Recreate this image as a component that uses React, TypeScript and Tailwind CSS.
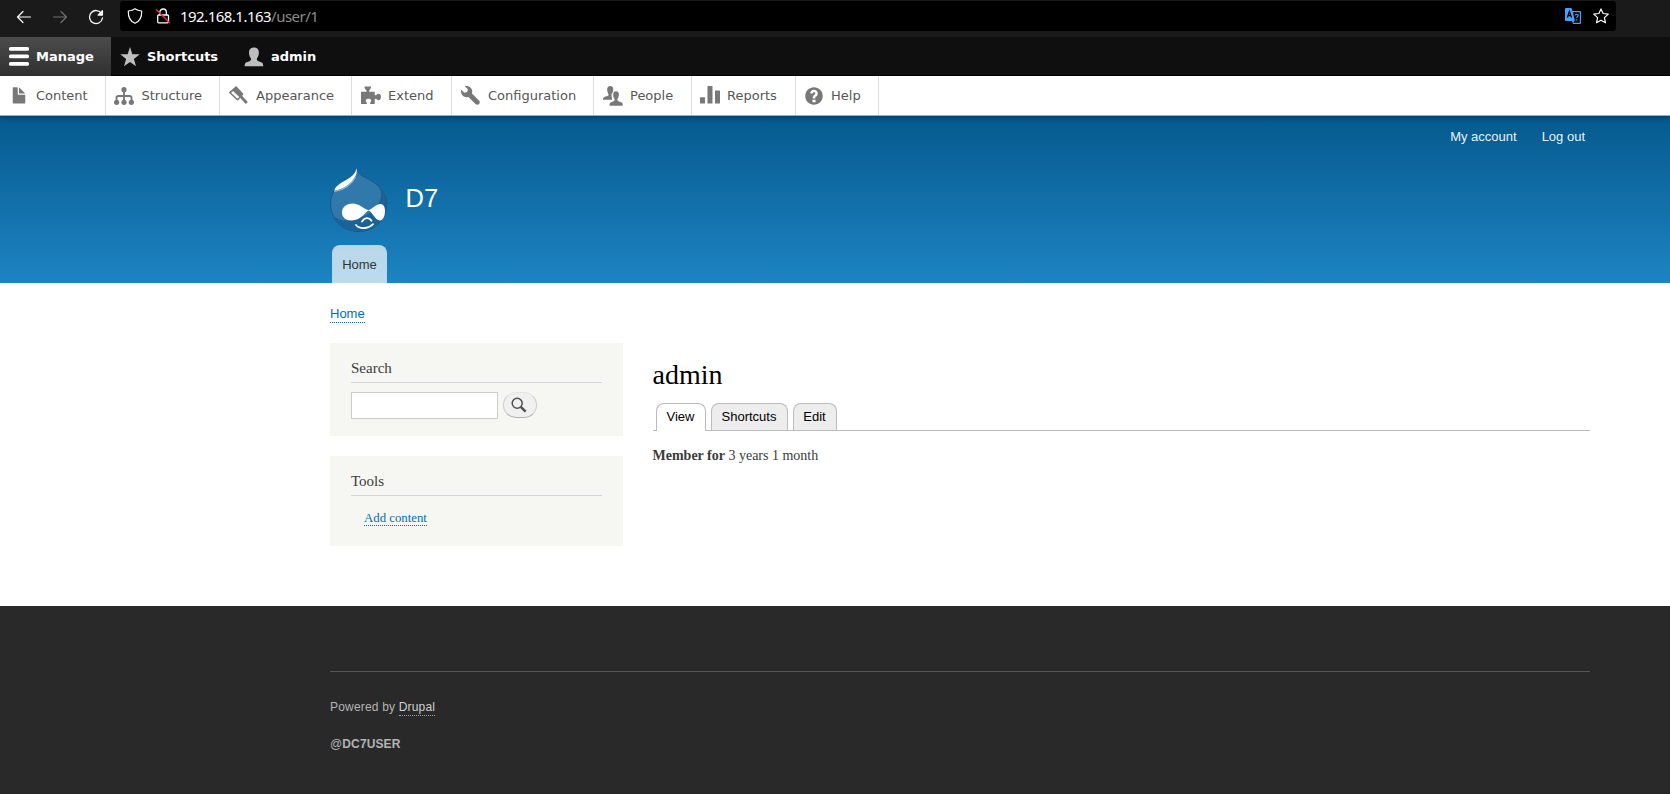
import React from 'react';

interface MenuItem {
  label: string;
  icon: React.ReactNode;
  box: string;
}

const Glyph: React.FC<{ children: React.ReactNode }> = ({ children }) => (
  <svg viewBox="0 0 16 16" className="w-5 h-5 shrink-0" fill="currentColor">
    {children}
  </svg>
);

const TRAY_ITEMS: MenuItem[] = [
  {
    label: 'Content',
    box: 'w-[106px] pl-[9px] gap-[7px]',
    icon: (
      <path d="M12.502 7h-5c-.276 0-.502-.225-.502-.5v-5c0-.275-.225-.5-.5-.5h-3c-.275 0-.5.225-.5.5v12.029c0 .275.225.5.5.5h9c.275 0 .5-.225.5-.5v-6.029c0-.275-.225-.5-.498-.5zM8.502 6h4c.275 0 .34-.159.146-.354l-4.293-4.292c-.195-.195-.353-.129-.353.146v4c0 .275.225.5.5.5z" />
    ),
  },
  {
    label: 'Structure',
    box: 'w-[114px] pl-2 gap-[7.500px]',
    icon: (
      <>
        <path d="M8 3v9M2 12.500V9.500Q2 8 3.500 8h9Q14 8 14 9.500v3" fill="none" stroke="currentColor" strokeWidth="1.500" />
        <circle cx="8" cy="2.900" r="2.100" />
        <circle cx="2.100" cy="13" r="2.100" />
        <circle cx="8" cy="13" r="2.100" />
        <circle cx="13.900" cy="13" r="2.100" />
      </>
    ),
  },
  {
    label: 'Appearance',
    box: 'w-[132px] pl-[9px] gap-[7px]',
    icon: (
      <>
        <path fillRule="evenodd" d="M5.700 0 11.300 5.900Q11.700 6.400 11.300 6.900L7.300 11.400Q6.800 11.800 6.300 11.400L.2 5.600Q-.2 5.200.2 4.800zM3.200 4 1.700 5.300 6.700 10.200 8.300 8.700z" />
        <path d="M9.300 8.200 14.200 13.600" stroke="currentColor" strokeWidth="2.200" />
      </>
    ),
  },
  {
    label: 'Extend',
    box: 'w-[100px] pl-[9px] gap-[7px]',
    icon: (
      <path d="M0 4.600h3.800c.6 0 .9-.5.500-1.100L3.400 2.300C2.900 1.500 2.600.9 2.900.3h5c.3.6 0 1.200-.5 2L6.600 3.500c-.4.600-.1 1.100.5 1.100H11v2.200c0 .6.700.8 1.200.4.7-.6 1.200-1 1.900-1 1.200 0 1.900 1.200 1.900 2.600s-.7 2.600-1.900 2.600c-.7 0-1.200-.5-1.900-1-.5-.4-1.200-.2-1.200.4v3.600H7.800c-.6 0-.8-.5-.5-1 .5-.7.9-1.100.9-1.800 0-1-1-1.500-2.200-1.500s-2.200.5-2.200 1.500c0 .7.4 1.100.9 1.800.3.5.1 1-.5 1H0z" />
    ),
  },
  {
    label: 'Configuration',
    box: 'w-[142px] pl-[9px] gap-[7px]',
    icon: (
      <path d="M14.416 11.586l-.01-.008-5.656-5.656c.15-.449.252-.921.252-1.421 0-2.485-2.016-4.500-4.502-4.500-.505 0-.981.102-1.434.255l2.431 2.431-.588 2.196-2.196.588-2.445-2.445c-.162.464-.268.956-.268 1.473 0 2.486 2.014 4.500 4.500 4.500.5 0 .972-.102 1.421-.251l5.667 5.665c.781.781 2.047.781 2.828 0s.781-2.047 0-2.827z" />
    ),
  },
  {
    label: 'People',
    box: 'w-[98px] pl-[9px] gap-[7px]',
    icon: (
      <>
        <path d="M5.800 0C7.500 0 8.300 1.300 8.200 3c0 1.200-.4 2-.8 2.600-.6 1-.8 2.700-.2 3.900v1.500H0c0-1.300.3-2 1.500-2.400l2-.7c1-.4 1.200-1 .6-2-.5-.8-.8-1.800-.8-3C3.300 1.200 4.200 0 5.800 0z" />
        <path d="M10.300 4c1.800 0 2.700 1.300 2.600 3.100 0 1.200-.5 2.200-.9 2.900-.6 1-.3 1.700.6 2.100l2 .7c1.200.4 1.400 1.300 1.400 3.200H5c0-1.900.3-2.800 1.400-3.200l1.800-.7c1-.4 1.200-1.100.6-2.100-.5-.7-.9-1.700-.9-2.900C7.900 5.300 8.700 4 10.300 4z" stroke="#fff" strokeWidth=".4" />
      </>
    ),
  },
  {
    label: 'Reports',
    box: 'w-[104px] pl-2 gap-[7px]',
    icon: (
      <>
        <rect x="0" y="9" width="4" height="5" rx=".4" />
        <rect x="6" y="0" width="4" height="14" rx=".4" />
        <rect x="12" y="3.500" width="4" height="10.500" rx=".4" />
      </>
    ),
  },
  {
    label: 'Help',
    box: 'w-[83px] pl-2 gap-[7px]',
    icon: (
      <path d="M8.002 1c-3.868 0-7.002 3.134-7.002 7s3.134 7 7.002 7c3.865 0 7-3.134 7-7s-3.135-7-7-7zm3 5c0 .551-.16 1.085-.477 1.586l-.158.22c-.07.093-.189.241-.361.393-.168.148-.35.299-.545.447l-.203.189-.141.129-.096.17-.021.235v.63h-2.001v-.704c.026-.396.078-.73.204-.999.125-.269.271-.498.439-.688l.225-.21-.01-.015.176-.14.137-.128c.186-.139.357-.277.516-.417l.148-.18c.098-.152.168-.323.168-.518 0-.552-.447-1-1.002-1-.551 0-.998.448-.998 1h-2.002c0-1.657 1.343-3 3-3s3.002 1.343 3.002 3zm-1.752 6.750c0 .138-.112.25-.25.25h-1.996c-.138 0-.25-.112-.25-.25v-1.500c0-.138.112-.25.25-.25h1.996c.138 0 .25.112.25.25z" />
    ),
  },
];

const BrowserBar = () => (
  <div className="h-[37px] bg-[#1a1a1a] flex items-start">
    <div className="w-[120px] h-[33px] shrink-0 flex items-center pl-4 text-[#fbfbfe]">
      <svg viewBox="0 0 16 16" className="w-4 h-4" fill="none" stroke="currentColor" strokeWidth="1.200" strokeLinecap="round" strokeLinejoin="round">
        <path d="M14.500 8H1.500M7 2.500 1.500 8 7 13.500" />
      </svg>
      <svg viewBox="0 0 16 16" className="w-4 h-4 ml-5 text-[#6e6e6e]" fill="none" stroke="currentColor" strokeWidth="1.200" strokeLinecap="round" strokeLinejoin="round">
        <path d="M1.500 8h13M9 2.500 14.500 8 9 13.500" />
      </svg>
      <svg viewBox="0 0 16 16" className="w-4 h-4 ml-5" fill="none" stroke="currentColor" strokeWidth="1.300" strokeLinecap="round" strokeLinejoin="round">
        <path d="M13.600 4.600A6.500 6.500 0 1 0 14.500 9" />
        <path d="M14.400 1.800v4.300h-4.300z" fill="currentColor" />
      </svg>
    </div>
    <div className="mt-px w-[1496px] h-[30px] rounded-[3px] bg-black flex items-center text-[#fbfbfe]">
      <svg viewBox="0 0 16 16" className="w-4 h-4 ml-[7px]" fill="none" stroke="currentColor" strokeWidth="1.200" strokeLinejoin="round">
        <path d="M8 .8c1.500 1.200 4 2 6.700 2.200C14.900 8.800 13 13.300 8 15.300 3 13.300 1.100 8.800 1.300 3 4 2.800 6.500 2 8 .8z" />
      </svg>
      <svg viewBox="0 0 16 16" className="w-4 h-4 ml-3" fill="none" strokeWidth="1.300">
        <rect x="2.700" y="7" width="10.800" height="7.800" rx="1" stroke="currentColor" />
        <path d="M4.800 7V4.300a3.300 3.300 0 0 1 6.600 0V7" stroke="currentColor" />
        <path d="M1 1.200 14.800 15" stroke="#e22850" strokeWidth="1.500" />
      </svg>
      <div className="ml-[9px] font-['Noto_Sans',sans-serif] text-[15px] leading-5 tracking-[-0.52px] flex-1">
        192.168.1.163<span className="text-[#8c8c8e]">/user/1</span>
      </div>
      <svg viewBox="0 0 16 16" className="w-4 h-4 text-[#45a1ff]">
        <path d="M1 0h5.500l1 3H15q1 0 1 1v11q0 1-1 1H8l-1-3H1q-1 0-1-1V1q0-1 1-1z" fill="currentColor" />
        <path d="M8 4.200h6.800v10.600H8.200l1.600-2.300z" fill="#000" />
        <path d="M2.400 9.500 4.400 3.500l2.200 6M3.200 7.500h2.600" fill="none" stroke="#000" strokeWidth="1.300" />
        <path d="M10.300 7.500c.2-1.700 3-1.600 2.800.1-.1 1-1.400 1.200-1.400 2.400M11.700 11.200v1.200" fill="none" stroke="currentColor" strokeWidth="1.200" />
      </svg>
      <svg viewBox="0 0 16 16" className="w-4 h-4 ml-3 mr-[7px]" fill="none" stroke="currentColor" strokeWidth="1.200" strokeLinejoin="round">
        <path d="M8 .9 10.100 5.500l5.200.6-3.900 3.500 1.100 5.200L8 12.200l-4.500 2.600 1.100-5.200L.7 6.100l5.200-.6z" />
      </svg>
    </div>
  </div>
);

const AdminBar = () => (
  <nav className="h-[39px] bg-[#0f0f0f] flex text-white font-['DejaVu_Sans',sans-serif] font-bold text-[13px]">
    <a className="w-[111px] flex items-center pl-[9px] gap-[7px] bg-linear-to-b from-[#4c4c4c] to-[#303030]">
      <Glyph>
        <rect y="0" width="16" height="3" rx="1.200" />
        <rect y="6" width="16" height="3" rx="1.200" />
        <rect y="12" width="16" height="3" rx="1.200" />
      </Glyph>
      <span>Manage</span>
    </a>
    <a className="w-[124px] flex items-center pl-[9px] gap-[7px] border-b border-black">
      <span className="mt-px text-[#bebebe]">
        <Glyph>
          <path d="M8 0l1.900 5.700 5.900.1-4.700 3.700 1.700 5.900L8 12l-4.800 3.400 1.700-5.900L.2 5.800l5.900-.1z" />
        </Glyph>
      </span>
      <span className="mt-0.5">Shortcuts</span>
    </a>
    <a className="flex-1 flex items-center pl-[9px] gap-[7px] border-b border-black">
      <span className="mt-px text-[#bebebe]">
        <Glyph>
          <path d="M8 .3c2.500 0 4 1.600 3.900 4.100 0 1.700-.5 3.200-1.200 4.200-.8 1.200-.5 2.200.8 2.700l2.300.8c1.200.5 1.600 1.300 1.600 3.300H.5c0-2 .4-2.800 1.600-3.300l2.300-.8c1.300-.5 1.600-1.500.8-2.700-.7-1-1.200-2.500-1.200-4.200C3.900 1.900 5.500.3 8 .3z" />
        </Glyph>
      </span>
      <span className="mt-0.5">admin</span>
    </a>
  </nav>
);

const AdminTray = () => (
  <nav className="relative h-10 bg-white border-b border-[#aaa] shadow-[0_0_5px_1px_rgba(0,0,0,0.4)] [clip-path:inset(0_0_-10px_0)] flex text-[13px] text-[#565656] font-['DejaVu_Sans',sans-serif]">
    {TRAY_ITEMS.map((item) => (
      <a key={item.label} className={`${item.box} flex items-center border-r border-[#ddd]`}>
        <span className="text-[#787878]">
          <Glyph>{item.icon}</Glyph>
        </span>
        <span>{item.label}</span>
      </a>
    ))}
  </nav>
);

const Druplicon = () => (
  <svg viewBox="0 0 57 65" className="w-[57px] h-[65px]">
    <path d="M26.500 1c.5 4 3.500 7 9.500 10 11 5 20.500 13 20.500 26 0 16-12 27.500-28 27.500S.6 53 .6 37C.6 25 7 18.500 16 13 22 9.500 25.500 6 26.500 1z" fill="#3079aa" stroke="#1a5785" />
    <path d="M45 15.500c7.500 5.500 11.200 12.500 11.200 21.500 0 16-12 27-27.700 27C15 64 5.500 56.500 2 47c3 4 8 6.500 14 6.500 14 0 34-9 35-25.500 0-5-2.500-9.500-6-12.500z" fill="#1b6397" />
    <path d="M26.500 1c.4 2.500.6 4.500-.8 7.500C23 15.500 14 22.500 4.300 23.700 5 19.500 11 15.500 17 12.500c5-3 8.500-6 9.500-11.500z" fill="#fff" />
    <path d="M4.300 24.500C14 23 22 17 25.500 10" fill="none" stroke="#8cb6d2" strokeWidth="1.500" />
    <path d="M38.500 43.500c-2 0-7 10-17 10-6 0-9.500-3.500-9.500-8 0-5.500 4.500-9 10.500-9 7 0 12.500 6.500 16 6.500 3 0 7-6 12-6 3 0 4.500 3 4.500 7 0 5-2 9.500-5 9.500-5 0-8.500-10-11.500-10z" fill="#fff" />
    <path d="M32 54.500c2.500-4 7-4.500 9.500-.8M26 58c3 4 12 4.500 17-.8" fill="none" stroke="#fff" strokeWidth="1.800" strokeLinecap="round" />
  </svg>
);

const SiteHeader = () => (
  <header className="h-[167px] flex flex-col bg-linear-to-b from-[#055a8e] to-[#1d84c3] font-['Liberation_Sans',sans-serif] text-white">
    <div className="h-[51px] flex justify-end pr-[85px] pt-[11px] gap-[25px] text-[13px] leading-5 text-white/95">
      <a>My account</a>
      <a>Log out</a>
    </div>
    <div className="h-[78px] flex pl-[330px]">
      <Druplicon />
      <span className="ml-[18.500px] mt-[15px] text-[25.500px] leading-8">D7</span>
    </div>
    <div className="flex pl-[332px]">
      <a className="w-[55px] h-[38px] rounded-t-lg bg-white/70 text-[#333] text-[13px] leading-10 text-center">Home</a>
    </div>
  </header>
);

const Block: React.FC<{ title: string; className: string; children: React.ReactNode }> = ({ title, className, children }) => (
  <section className={`bg-[#f6f6f2] px-[21px] pt-[15px] ${className}`}>
    <h2 className="h-[25px] border-b border-[#d6d6d6] text-[15px] leading-5">{title}</h2>
    {children}
  </section>
);

const Sidebar = () => (
  <aside className="w-[293px] flex flex-col gap-5">
    <Block title="Search" className="h-[93px]">
      <div className="flex gap-[5px] pt-[9px]">
        <input type="text" className="w-[147px] h-[27px] bg-white border border-[#ccc]" />
        <button className="w-[34px] h-[26px] rounded-full bg-[#f0f0f0] border border-[#ccc] border-t-[#e4e4e4] border-b-[#b4b4b4] flex items-center justify-center">
          <svg viewBox="0 0 16 16" className="w-4 h-4 -mt-px -ml-0.5" fill="none" stroke="#505050">
            <circle cx="6.200" cy="6.200" r="5" strokeWidth="1.500" />
            <path d="M9.800 9.800 14.600 14.600" strokeWidth="2.500" />
          </svg>
        </button>
      </div>
    </Block>
    <Block title="Tools" className="h-[90px]">
      <div className="flex pl-[13px] pt-[13px]">
        <a className="h-[17px] border-b border-dotted border-[#0071b3] text-[#0071b3] text-[12.800px] leading-[19px]">Add content</a>
      </div>
    </Block>
  </aside>
);

const Content = () => (
  <main className="w-[937px] pt-[15px]">
    <h1 className="text-[28px] leading-[34px] text-black">admin</h1>
    <div className="mt-[11px] flex items-end gap-[5px] h-7 pl-[3px] border-b border-[#bbb] font-['Liberation_Sans',sans-serif] text-[13px] leading-[26px] text-black">
      <a className="-mb-px h-7 w-[50px] text-center border border-b-0 border-[#bbb] rounded-t-lg bg-white">View</a>
      <a className="h-[27px] w-[77px] text-center border border-b-0 border-[#bbb] rounded-t-lg bg-[#ededed]">Shortcuts</a>
      <a className="h-[27px] w-11 text-center border border-b-0 border-[#bbb] rounded-t-lg bg-[#ededed]">Edit</a>
    </div>
    <p className="mt-[14px] text-sm leading-[21px]">
      <b>Member for</b> 3 years 1 month
    </p>
  </main>
);

const SiteFooter = () => (
  <footer className="h-[188px] bg-[#292929] border-b border-[#2c2226] pt-[65px] pl-[330px] pr-20 font-['Liberation_Sans',sans-serif] text-xs text-[#b4b4b4]">
    <div className="border-t border-[#555] pt-[27px]">
      <p className="leading-[17px] tracking-[0.18px]">
        Powered by <a className="inline-block h-[17px] leading-[17px] border-b border-dotted border-[#a0a0a0] text-[#d0d0d0]">Drupal</a>
      </p>
      <p className="mt-5 leading-[17px] tracking-[0.12px]">
        @<b>DC7USER</b>
      </p>
    </div>
  </footer>
);

export default function App() {
  return (
    <div className="w-[1670px] h-[794px] overflow-hidden bg-white">
      <BrowserBar />
      <AdminBar />
      <AdminTray />
      <SiteHeader />
      <div className="h-[323px] pl-[330px] font-['Liberation_Serif',serif] text-[#3b3b3b]">
        <div className="h-[60px] pt-[22px] flex items-start">
          <a className="h-[18px] border-b border-dotted border-[#0071b3] font-['Liberation_Sans',sans-serif] text-[13px] leading-[17px] text-[#0071b3]">Home</a>
        </div>
        <div className="flex gap-[29.500px]">
          <Sidebar />
          <Content />
        </div>
      </div>
      <SiteFooter />
    </div>
  );
}
